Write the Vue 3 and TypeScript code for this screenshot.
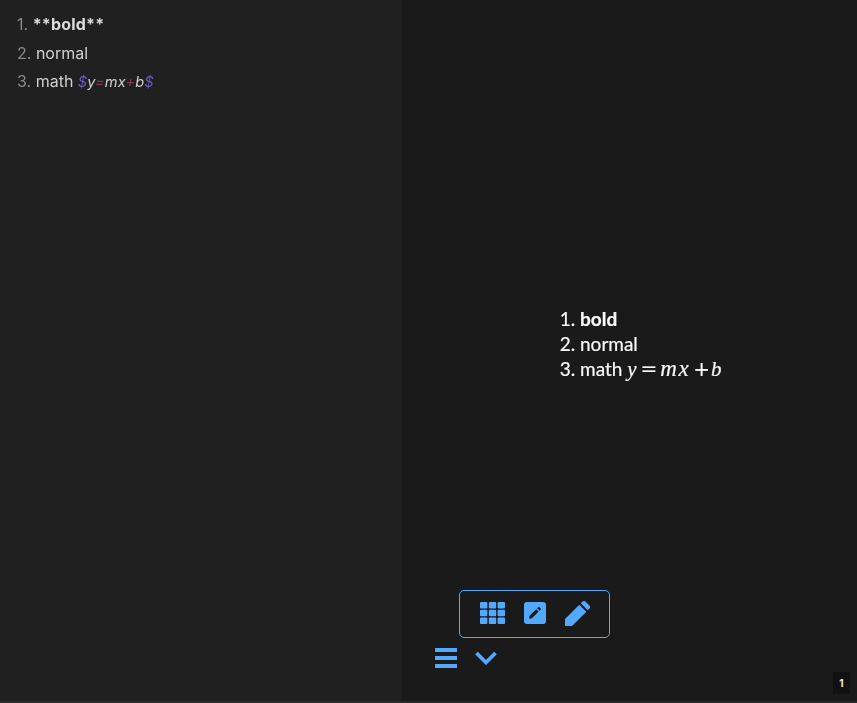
<script setup lang="ts">
const lines = ['normal']
</script>

<template>
  <div class="app">
    <main class="panes">
      <section class="editor">
        <div class="gray">
          <div class="line"><span class="num">1.</span> <span class="strong">**bold**</span></div>
          <div class="line"><span class="num">2.</span> {{ lines[0] }}</div>
          <div class="line"><span class="num">3.</span> math <span class="tex"><span class="d">$</span>y<span class="op">=</span>mx<span class="op">+</span>b<span class="d">$</span></span></div>
        </div>
      </section>
      <section class="preview">
        <ol class="list">
          <li><b>bold</b></li>
          <li>normal</li>
          <li>math <span class="math"><i>y</i><span class="rel">=</span><i class="mx">mx</i><span class="bin">+</span><i>b</i></span></li>
        </ol>
        <div class="toolbar">
          <svg width="25" height="22" viewBox="0 0 25 22"><g fill="#54a9ff"><rect x="0" y="0" width="7.400" height="6.400" rx="1"/><rect x="8.800" y="0" width="7.400" height="6.400" rx="1"/><rect x="17.600" y="0" width="7.400" height="6.400" rx="1"/><rect x="0" y="7.800" width="7.400" height="6.400" rx="1"/><rect x="8.800" y="7.800" width="7.400" height="6.400" rx="1"/><rect x="17.600" y="7.800" width="7.400" height="6.400" rx="1"/><rect x="0" y="15.600" width="7.400" height="6.400" rx="1"/><rect x="8.800" y="15.600" width="7.400" height="6.400" rx="1"/><rect x="17.600" y="15.600" width="7.400" height="6.400" rx="1"/></g></svg>
          <svg width="22" height="22" viewBox="0 0 22 22"><rect width="22" height="22" rx="3" fill="#54a9ff"/><path d="M5 16.800l.6-3 6.600-6.600 2.400 2.400-6.600 6.600zM13.200 6.200l.9-.9a.9.9 0 0 1 1.300 0l1.200 1.200a.9.9 0 0 1 0 1.300l-.9.9z" fill="#1a1a1a"/></svg>
          <svg width="25" height="25" viewBox="0 0 25 25"><path d="M0 25V18L14.300 3.700l7 7L7 25zM15.800 2.300l1.500-1.500a2.400 2.400 0 0 1 3.400 0l3.500 3.500a2.400 2.400 0 0 1 0 3.400l-1.500 1.500z" fill="#54a9ff"/></svg>
        </div>
        <div class="controls">
          <svg width="22" height="20" viewBox="0 0 22 20"><g fill="#54a9ff"><rect y="0" width="22" height="3.900" rx=".5"/><rect y="8" width="22" height="3.900" rx=".5"/><rect y="16" width="22" height="3.900" rx=".5"/></g></svg>
          <svg width="22" height="14" viewBox="0 0 22 14"><path d="M1.500 2l9.500 9.500L20.500 2" fill="none" stroke="#54a9ff" stroke-width="3.700"/></svg>
        </div>
        <div class="page">1</div>
      </section>
    </main>
    <div class="strip"></div>
  </div>
</template>

<style>
html, body { margin: 0; background: #1a1a1a; }
</style>

<style scoped>
.app { display: flex; flex-direction: column; width: 857px; height: 703px; overflow: hidden; }
.panes { flex: 1; display: flex; min-height: 0; }
.strip { height: 2px; background: #2a2a2a; }
.editor { width: 402px; box-sizing: border-box; background: #202020; color: #cfcfcf; padding: 10px 17px; font: 16px/28.500px Inter, sans-serif; }
.gray { will-change: transform; }
.line { white-space: pre; height: 28.500px; }
.num { color: #8a8a8a; }
.strong { font-weight: 700; color: #dcdcdc; letter-spacing: .2px; }
.tex { font-size: 14.600px; font-style: italic; letter-spacing: .1px; }
.d { color: #7056c8; }
.op { color: #8d3350; }
.preview { flex: 1; position: relative; background: #1a1a1a; display: flex; align-items: center; }
.list { margin: 0 0 0 160px; padding: 0 0 0 18px; color: #f8f8f8; font: 19px/25px Lato, sans-serif; position: relative; top: -7px; will-change: transform; -webkit-text-stroke: .2px #f8f8f8; }
.list b { font-weight: 700; }
.math { font: italic 21px "Liberation Serif", serif; }
.mx { font-size: 23px; letter-spacing: 1.500px; }
.rel { font: 20px/1 "DejaVu Serif", serif; margin: 0 3px 0 4px; }
.bin { font: 20px/1 "DejaVu Serif", serif; margin: 0 1px 0 3px; }
.toolbar { position: absolute; left: 57px; top: 590px; width: 151px; height: 48px; box-sizing: border-box; border: 1px solid #54a9ff; border-radius: 5px; display: flex; align-items: center; gap: 19px; padding: 0 0 2px 20px; }
.controls { position: absolute; left: 33px; top: 648px; display: flex; align-items: center; gap: 18px; }
.page { position: absolute; right: 7px; bottom: 7px; width: 17px; height: 22px; background: #111; color: #eee; font: 700 10px/22px Inter, sans-serif; text-align: center; }
</style>
